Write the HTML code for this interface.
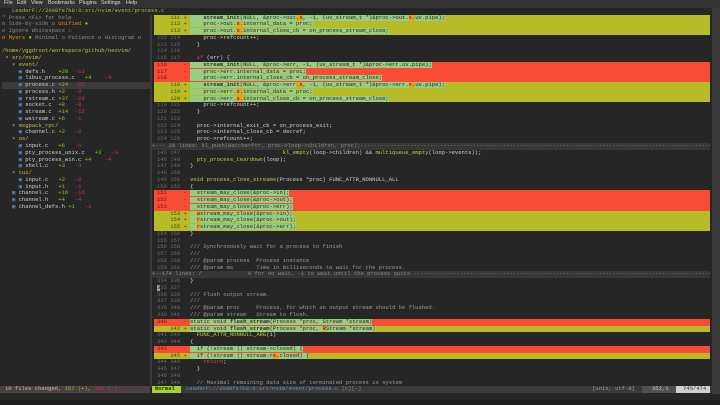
<!DOCTYPE html>
<html><head><meta charset="utf-8"><style>
*{margin:0;padding:0;box-sizing:border-box}
body{width:720px;height:405px;background:#262626;position:relative;overflow:hidden;font-family:"Liberation Mono",monospace}
.m{position:absolute;left:0;top:0;width:720px;height:7.8px;background:#333;font:5.4px/7.8px "Liberation Sans",sans-serif;color:#ddd}
.m span{position:absolute;top:0}
.r{position:absolute;top:calc(7.8px + var(--i)*6.76px);height:6.76px;line-height:6.76px;font-size:5.53px;white-space:pre;color:#cfcfcf;overflow:hidden}
.L{left:2px;width:148px}
.R{left:153.7px;width:556.5px;padding-left:3.32px}
.d{background:#f84c35}.a{background:#b8bb28}
.d .n{color:#6a1508}.a .n{color:#4a4a00}
.n{color:#6a6a6a}
.g{background:#98cc80;color:#2a2a2a}
.g .f{color:#2a2a2a;font-weight:bold}
.f{color:#c8c850}.fb{color:#c8c850;font-weight:bold}
.k{color:#e0403a}.c{color:#9a9a9a}
.o{background:#f0a020}
.F{left:152px;width:558px;background:#363636;color:#8a8a8a}
.y{color:#c0c040}.or{color:#e08a20}.p{color:#90c030}.q{color:#d03070}.gr{color:#8a8a8a}.b{color:#5a8ad0}
.sel{background:#3a3a3a}
</style></head><body>
<div class="m"><span style="left:4px">File</span><span style="left:17px">Edit</span><span style="left:31px">View</span><span style="left:48px">Bookmarks</span><span style="left:79px">Plugins</span><span style="left:101px">Settings</span><span style="left:126px">Help</span></div>
<div style="position:absolute;left:150px;top:14.5px;width:2px;height:372px;background:#3a3a3a"></div>
<div style="position:absolute;left:712px;top:7.8px;width:8px;height:386px;background:#3a3a3a"></div>
<div style="position:absolute;left:0;top:400px;width:720px;height:5px;background:#1e1e1e"></div>

<div class="r" style="--i:0;left:12px;width:200px;color:#b8b840">LeaderF://2008fe7b8:0:src/nvim/event/process.c</div>

<div class="r L gr" style="--i:1">" Press &lt;F1&gt; for help</div>
<div class="r L gr" style="--i:2">o Side-by-side o <span class="or">Unified</span> <span class="p">●</span></div>
<div class="r L gr" style="--i:3">o Ignore Whitespace <span class="q">☒</span></div>
<div class="r L gr" style="--i:4"><span class="or">o Myers</span> <span class="p">●</span> Minimal o Patience o Histogram o</div>
<div class="r L y" style="--i:6">/home/yggdroot/workspace/github/neovim/</div>
<div class="r L" style="--i:7"> <span class="or">▾</span> <span class="y">src/nvim/</span></div>
<div class="r L" style="--i:8">   <span class="or">▾</span> <span class="y">event/</span></div>
<div class="r L" style="--i:9">     <span class="b">▣</span> defs.h    <span class="p">+20</span>  <span class="q">-11</span></div>
<div class="r L" style="--i:10">     <span class="b">▣</span> libuv_process.c   <span class="p">+4</span>    <span class="q">-4</span></div>
<div class="r L sel" style="--i:11">     <span class="b">▣</span> process.c <span class="p">+24</span>  <span class="q">-22</span></div>
<div class="r L" style="--i:12">     <span class="b">▣</span> process.h <span class="p">+2</span>   <span class="q">-2</span></div>
<div class="r L" style="--i:13">     <span class="b">▣</span> rstream.c <span class="p">+37</span>  <span class="q">-29</span></div>
<div class="r L" style="--i:14">     <span class="b">▣</span> socket.c  <span class="p">+8</span>   <span class="q">-8</span></div>
<div class="r L" style="--i:15">     <span class="b">▣</span> stream.c  <span class="p">+14</span>  <span class="q">-12</span></div>
<div class="r L" style="--i:16">     <span class="b">▣</span> wstream.c <span class="p">+6</span>   <span class="q">-1</span></div>
<div class="r L" style="--i:17">   <span class="or">▾</span> <span class="y">msgpack_rpc/</span></div>
<div class="r L" style="--i:18">     <span class="b">▣</span> channel.c <span class="p">+2</span>   <span class="q">-2</span></div>
<div class="r L" style="--i:19">   <span class="or">▾</span> <span class="y">os/</span></div>
<div class="r L" style="--i:20">     <span class="b">▣</span> input.c   <span class="p">+6</span>   <span class="q">-6</span></div>
<div class="r L" style="--i:21">     <span class="b">▣</span> pty_process_unix.c   <span class="p">+3</span>   <span class="q">-3</span></div>
<div class="r L" style="--i:22">     <span class="b">▣</span> pty_process_win.c <span class="p">+4</span>    <span class="q">-4</span></div>
<div class="r L" style="--i:23">     <span class="b">▣</span> shell.c   <span class="p">+3</span>   <span class="q">-3</span></div>
<div class="r L" style="--i:24">   <span class="or">▾</span> <span class="y">tui/</span></div>
<div class="r L" style="--i:25">     <span class="b">▣</span> input.c   <span class="p">+2</span>   <span class="q">-2</span></div>
<div class="r L" style="--i:26">     <span class="b">▣</span> input.h   <span class="p">+1</span>   <span class="q">-1</span></div>
<div class="r L" style="--i:27">   <span class="b">▣</span> channel.c   <span class="p">+16</span>  <span class="q">-16</span></div>
<div class="r L" style="--i:28">   <span class="b">▣</span> channel.h   <span class="p">+4</span>   <span class="q">-4</span></div>
<div class="r L" style="--i:29">   <span class="b">▣</span> channel_defs.h <span class="p">+1</span>   <span class="q">-1</span></div>

<div class="r R a" style="--i:1"><span class="n">    111 + </span><span class="g">    <span class="f">stream_init</span>(NULL, &amp;proc-&gt;out<span class="o">.s</span>, -1, (uv_stream_t *)&amp;proc-&gt;out.<span class="o">s.</span>uv.pipe);</span></div>
<div class="r R a" style="--i:2"><span class="n">    112 + </span><span class="g">    proc-&gt;out.<span class="o">s.</span>internal_data = proc;</span></div>
<div class="r R a" style="--i:3"><span class="n">    113 + </span><span class="g">    proc-&gt;out.<span class="o">s.</span>internal_close_cb = on_process_stream_close;</span></div>
<div class="r R" style="--i:4"><span class="n">112 114   </span>    proc-&gt;refcount++;</div>
<div class="r R" style="--i:5"><span class="n">113 115   </span>  }</div>
<div class="r R" style="--i:6"><span class="n">114 116   </span></div>
<div class="r R" style="--i:7"><span class="n">115 117   </span>  <span class="k">if</span> (err) {</div>
<div class="r R d" style="--i:8"><span class="n">116     - </span><span class="g">    <span class="f">stream_init</span>(NULL, &amp;proc-&gt;err, -1, (uv_stream_t *)&amp;proc-&gt;err.uv.pipe);</span></div>
<div class="r R d" style="--i:9"><span class="n">117     - </span><span class="g">    proc-&gt;err.internal_data = proc;</span></div>
<div class="r R d" style="--i:10"><span class="n">118     - </span><span class="g">    proc-&gt;err.internal_close_cb = on_process_stream_close;</span></div>
<div class="r R a" style="--i:11"><span class="n">    118 + </span><span class="g">    <span class="f">stream_init</span>(NULL, &amp;proc-&gt;err<span class="o">.s</span>, -1, (uv_stream_t *)&amp;proc-&gt;err.<span class="o">s.</span>uv.pipe);</span></div>
<div class="r R a" style="--i:12"><span class="n">    119 + </span><span class="g">    proc-&gt;err.<span class="o">s.</span>internal_data = proc;</span></div>
<div class="r R a" style="--i:13"><span class="n">    120 + </span><span class="g">    proc-&gt;err.<span class="o">s.</span>internal_close_cb = on_process_stream_close;</span></div>
<div class="r R" style="--i:14"><span class="n">119 121   </span>    proc-&gt;refcount++;</div>
<div class="r R" style="--i:15"><span class="n">120 122   </span>  }</div>
<div class="r R" style="--i:16"><span class="n">121 123   </span></div>
<div class="r R" style="--i:17"><span class="n">122 124   </span>  proc-&gt;internal_exit_cb = on_process_exit;</div>
<div class="r R" style="--i:18"><span class="n">123 125   </span>  proc-&gt;internal_close_cb = decref;</div>
<div class="r R" style="--i:19"><span class="n">124 126   </span>  proc-&gt;refcount++;</div>
<div class="r F" style="--i:20">+--- 20 lines: kl_push(WatcherPtr, proc-&gt;loop-&gt;children, proc);-------------------------------------------------------------------------------------------------------------</div>
<div class="r R" style="--i:21"><span class="n">145 147   </span>                            <span class="f">kl_empty</span>(loop-&gt;children) &amp;&amp; <span class="f">multiqueue_empty</span>(loop-&gt;events));</div>
<div class="r R" style="--i:22"><span class="n">146 148   </span>  <span class="f">pty_process_teardown</span>(loop);</div>
<div class="r R" style="--i:23"><span class="n">147 149   </span>}</div>
<div class="r R" style="--i:24"><span class="n">148 150   </span></div>
<div class="r R" style="--i:25"><span class="n">149 151   </span><span class="f">void process_close_streams</span>(Process *proc) FUNC_ATTR_NONNULL_ALL</div>
<div class="r R" style="--i:26"><span class="n">150 152   </span>{</div>
<div class="r R d" style="--i:27"><span class="n">151     - </span><span class="g">  stream_may_close(&amp;proc-&gt;in);</span></div>
<div class="r R d" style="--i:28"><span class="n">152     - </span><span class="g">  stream_may_close(&amp;proc-&gt;out);</span></div>
<div class="r R d" style="--i:29"><span class="n">153     - </span><span class="g">  stream_may_close(&amp;proc-&gt;err);</span></div>
<div class="r R a" style="--i:30"><span class="n">    153 + </span><span class="g">  <span class="o">w</span>stream_may_close(&amp;proc-&gt;in);</span></div>
<div class="r R a" style="--i:31"><span class="n">    154 + </span><span class="g">  <span class="o">r</span>stream_may_close(&amp;proc-&gt;out);</span></div>
<div class="r R a" style="--i:32"><span class="n">    155 + </span><span class="g">  <span class="o">r</span>stream_may_close(&amp;proc-&gt;err);</span></div>
<div class="r R" style="--i:33"><span class="n">154 156   </span>}</div>
<div class="r R" style="--i:34"><span class="n">155 157   </span></div>
<div class="r R c" style="--i:35"><span class="n">156 158   </span>/// Synchronously wait for a process to finish</div>
<div class="r R c" style="--i:36"><span class="n">157 159   </span>///</div>
<div class="r R c" style="--i:37"><span class="n">158 160   </span>/// @param process  Process instance</div>
<div class="r R c" style="--i:38"><span class="n">159 161   </span>/// @param ms       Time in milliseconds to wait for the process.</div>
<div class="r F" style="--i:39">+--174 lines: /              0 for no wait. -1 to wait until the process quits.-------------------------------------------------------------------------------------------</div>
<div class="r R" style="--i:40"><span class="n">334 336   </span>}</div>
<div class="r R" style="--i:41"><span class="n"><span style="background:#aaa;color:#222">3</span>35 337   </span></div>
<div class="r R c" style="--i:42"><span class="n">336 338   </span>/// Flush output stream.</div>
<div class="r R c" style="--i:43"><span class="n">337 339   </span>///</div>
<div class="r R c" style="--i:44"><span class="n">338 340   </span>/// @param proc     Process, for which an output stream should be flushed.</div>
<div class="r R c" style="--i:45"><span class="n">339 341   </span>/// @param stream   Stream to flush.</div>
<div class="r R d" style="--i:46"><span class="n">340     - </span><span class="g">static void <span class="f">flush_stream</span>(Process *proc, Stream *stream)</span></div>
<div class="r R a" style="--i:47"><span class="n">    342 + </span><span class="g">static void <span class="f">flush_stream</span>(Process *proc, <span class="o">R</span>Stream *stream)</span></div>
<div class="r R" style="--i:48"><span class="n">341 343   </span>  <span class="f">FUNC_ATTR_NONNULL_ARG</span>(1)</div>
<div class="r R" style="--i:49"><span class="n">342 344   </span>{</div>
<div class="r R d" style="--i:50"><span class="n">343     - </span><span class="g">  if (!stream || stream-&gt;closed) {</span></div>
<div class="r R a" style="--i:51"><span class="n">    345 + </span><span class="g">  if (!stream || stream-&gt;<span class="o">s.</span>closed) {</span></div>
<div class="r R" style="--i:52"><span class="n">344 346   </span>    <span class="k">return</span>;</div>
<div class="r R" style="--i:53"><span class="n">345 347   </span>  }</div>
<div class="r R" style="--i:54"><span class="n">346 348   </span></div>
<div class="r R c" style="--i:55"><span class="n">347 349   </span>  // Maximal remaining data size of terminated process is system</div>

<div class="r" style="--i:56;left:0;width:150px;background:#4a4040;color:#d8b8b8;padding-left:5px">10 files changed, <span class="p">157 (+)</span>, <span class="q">131 (-)</span></div>
<div class="r" style="--i:56;left:152px;width:560px;background:#3a3a3a"></div>
<div class="r" style="--i:56;left:152px;width:29px;background:#a8d030;color:#1a2a00;font-weight:bold;padding-left:3px">Normal</div>
<div class="r" style="--i:56;left:186px;width:200px;color:#7090b0">LeaderF://2008fe7b8:0:src/nvim/event/process.c [c][-]</div>
<div class="r" style="--i:56;left:592px;width:46px;color:#9a9a9a">[unix, utf-8]</div>
<div class="r" style="--i:56;left:642px;width:34px;background:#505050;color:#cfcfcf;padding-left:10px">352,1</div>
<div class="r" style="--i:56;left:676px;width:34px;background:#d0d0d0;color:#333;padding-left:7px">74%/474</div>
</body></html>
